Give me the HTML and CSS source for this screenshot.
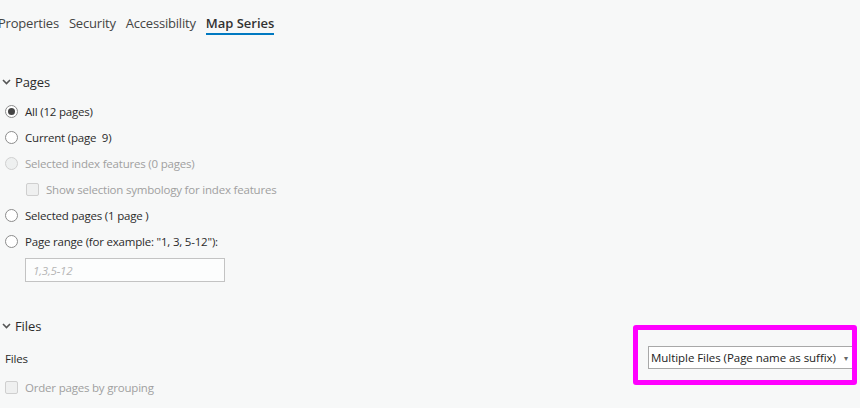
FILE: index.html
```html
<!DOCTYPE html>
<html lang="en">

<head>
    <meta charset="UTF-8">
    <meta name="viewport" content="width=device-width, initial-scale=1.0">
    <title>Export Layout - Map Series</title>
    <link rel="stylesheet" href="styles.css">
</head>

<body>
    <div class="tabs">
        <span class="tab">Properties</span>
        <span class="tab">Security</span>
        <span class="tab">Accessibility</span>
        <span class="tab active">Map Series</span>
    </div>

    <div class="section-head pages-head">
        <svg class="chevron" width="9" height="6" viewBox="0 0 9 6"><path d="M1 1 L4.5 4.5 L8 1" fill="none" stroke="#555" stroke-width="1.6"/></svg>
        <span>Pages</span>
    </div>

    <div class="row"><span class="radio checked"></span>All (12 pages)</div>
    <div class="row"><span class="radio"></span>Current (page&nbsp; 9)</div>
    <div class="row disabled"><span class="radio"></span>Selected index features (0 pages)</div>
    <div class="row disabled indent"><span class="check"></span>Show selection symbology for index features</div>
    <div class="row"><span class="radio"></span>Selected pages (1 page )</div>
    <div class="row"><span class="radio"></span>Page range (for example: "1, 3, 5-12"):</div>
    <div class="range-box"><input type="text" class="range" placeholder="1,3,5-12"></div>

    <div class="section-head files-head">
        <svg class="chevron" width="9" height="6" viewBox="0 0 9 6"><path d="M1 1 L4.5 4.5 L8 1" fill="none" stroke="#555" stroke-width="1.6"/></svg>
        <span>Files</span>
    </div>

    <div class="files-row">
        <span class="files-label">Files</span>
        <div class="dropdown">
            <span class="value">Multiple Files (Page name as suffix)</span>
            <span class="arrow">&#9662;</span>
            <div class="highlight"></div>
        </div>
    </div>

    <div class="row disabled"><span class="check"></span>Order pages by grouping</div>
</body>

</html>
```

FILE: styles.css
```css
body {
    margin: 0;
    padding: 0;
    width: 860px;
    height: 408px;
    overflow: hidden;
    background-color: #f7f8f8;
    font-family: "Open Sans", sans-serif;
    font-size: 11.5px;
    letter-spacing: -0.2px;
    color: #2b2b2b;
}

.tabs {
    display: flex;
    gap: 10px;
    height: 36px;
    margin-left: -2px;
    align-items: flex-start;
}

.tab {
    font-size: 13px;
    letter-spacing: -0.2px;
    color: #444;
    padding-top: 14px;
    height: 19px;
}

.tab.active {
    font-weight: 600;
    letter-spacing: 0;
    color: #323232;
    border-bottom: 2px solid #0079c1;
}

.section-head {
    display: flex;
    align-items: center;
    height: 20px;
    font-size: 13px;
    letter-spacing: -0.1px;
    color: #2b2b2b;
}

.pages-head {
    margin-top: 36px;
}

.files-head {
    margin-top: 34px;
}

.chevron {
    margin-left: 2px;
    margin-right: 4px;
}

.row {
    display: flex;
    align-items: center;
    height: 26px;
    padding-left: 5px;
    white-space: nowrap;
}

.pages-head + .row {
    margin-top: 6px;
}

.row.indent {
    padding-left: 26px;
}

.row.disabled {
    color: #a0a0a0;
}

.radio {
    width: 11px;
    height: 11px;
    border: 1px solid #8c8c8c;
    border-radius: 50%;
    background-color: #fff;
    margin-right: 7px;
    display: flex;
    align-items: center;
    justify-content: center;
}

.radio.checked::after {
    content: "";
    width: 7px;
    height: 7px;
    border-radius: 50%;
    background-color: #444;
}

.disabled .radio {
    border-color: #d0d0d0;
    background-color: #eef0f0;
}

.check {
    width: 11px;
    height: 11px;
    border: 1px solid #cfcfcf;
    border-radius: 2px;
    background-color: #eff0f0;
    margin-right: 7px;
}

.range-box {
    padding-left: 25px;
    margin-top: 4px;
}

.range {
    width: 200px;
    height: 24px;
    box-sizing: border-box;
    border: 1px solid #c3c3c3;
    background-color: #fcfdfd;
    font-family: "Open Sans", sans-serif;
    font-size: 11.5px;
    letter-spacing: -0.2px;
    padding: 0 7px;
    outline: none;
}

.range::placeholder {
    color: #b5b5b5;
    font-style: italic;
}

.files-row {
    display: flex;
    justify-content: space-between;
    align-items: center;
    margin-top: 10px;
    height: 23px;
    padding-left: 5px;
    padding-right: 7px;
}

.files-label {
    padding-top: 1px;
}

.dropdown {
    position: relative;
    width: 205px;
    height: 23px;
    box-sizing: border-box;
    border: 1px solid #a8a8a8;
    background-color: #fff;
    display: flex;
    align-items: center;
    justify-content: space-between;
    padding: 0 4px 0 2px;
    color: #222;
    letter-spacing: -0.05px;
    white-space: nowrap;
}

.arrow {
    font-size: 8px;
    color: #666;
}

.highlight {
    position: absolute;
    left: -16px;
    top: -22px;
    right: -5px;
    bottom: -17px;
    border: 5px solid #ff00ff;
    border-radius: 3px;
}

.files-row + .row {
    margin-top: 5px;
}
```
